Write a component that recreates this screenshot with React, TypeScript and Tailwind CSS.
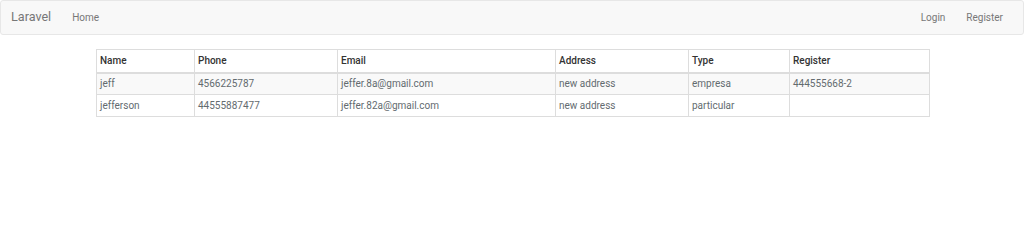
const rows = [
  {
    name: "jeff",
    phone: "4566225787",
    email: "jeffer.8a@gmail.com",
    address: "new address",
    type: "empresa",
    register: "444555668-2"
  },
  {
    name: "jefferson",
    phone: "44555887477",
    email: "jeffer.82a@gmail.com",
    address: "new address",
    type: "particular",
    register: ""
  }
];

export default function App() {
  return (
    <div className="min-h-[248px] bg-white font-['Roboto',sans-serif] text-[10px] text-[#636b6f]">
      <nav className="flex h-[35px] items-center justify-between rounded-[3px] border border-[#e7e7e7] bg-[#f8f8f8]">
        <div className="flex items-center">
          <a className="pl-[10px] pr-[11px] text-[12.6px] text-[#777]">Laravel</a>
          <a className="pl-[10px] text-[10px] text-[#777]">Home</a>
        </div>
        <div className="flex items-center gap-[21px] pr-[20px] text-[10px] text-[#777]">
          <a>Login</a>
          <a>Register</a>
        </div>
      </nav>

      <div className="ml-[96px] mt-[14px] w-[833px]">
        <table className="w-full table-fixed border-collapse border border-[#ddd]">
          <colgroup>
            <col className="w-[98px]" />
            <col className="w-[143px]" />
            <col className="w-[218px]" />
            <col className="w-[133px]" />
            <col className="w-[101px]" />
            <col className="w-[140px]" />
          </colgroup>
          <thead>
            <tr className="text-left text-[#333]">
              {["Name", "Phone", "Email", "Address", "Type", "Register"].map((h) => (
                <th key={h} className="h-[23px] border border-b-2 border-[#ddd] px-[3px] font-medium leading-[14px]">
                  {h}
                </th>
              ))}
            </tr>
          </thead>
          <tbody>
            {rows.map((r, i) => (
              <tr key={r.name} className={i % 2 === 0 ? "bg-[#f9f9f9]" : "bg-white"}>
                {[r.name, r.phone, r.email, r.address, r.type, r.register].map((c, j) => (
                  <td key={j} className="h-[22px] border border-[#ddd] px-[3px] leading-[14px]">
                    {c}
                  </td>
                ))}
              </tr>
            ))}
          </tbody>
        </table>
      </div>
    </div>
  );
}
